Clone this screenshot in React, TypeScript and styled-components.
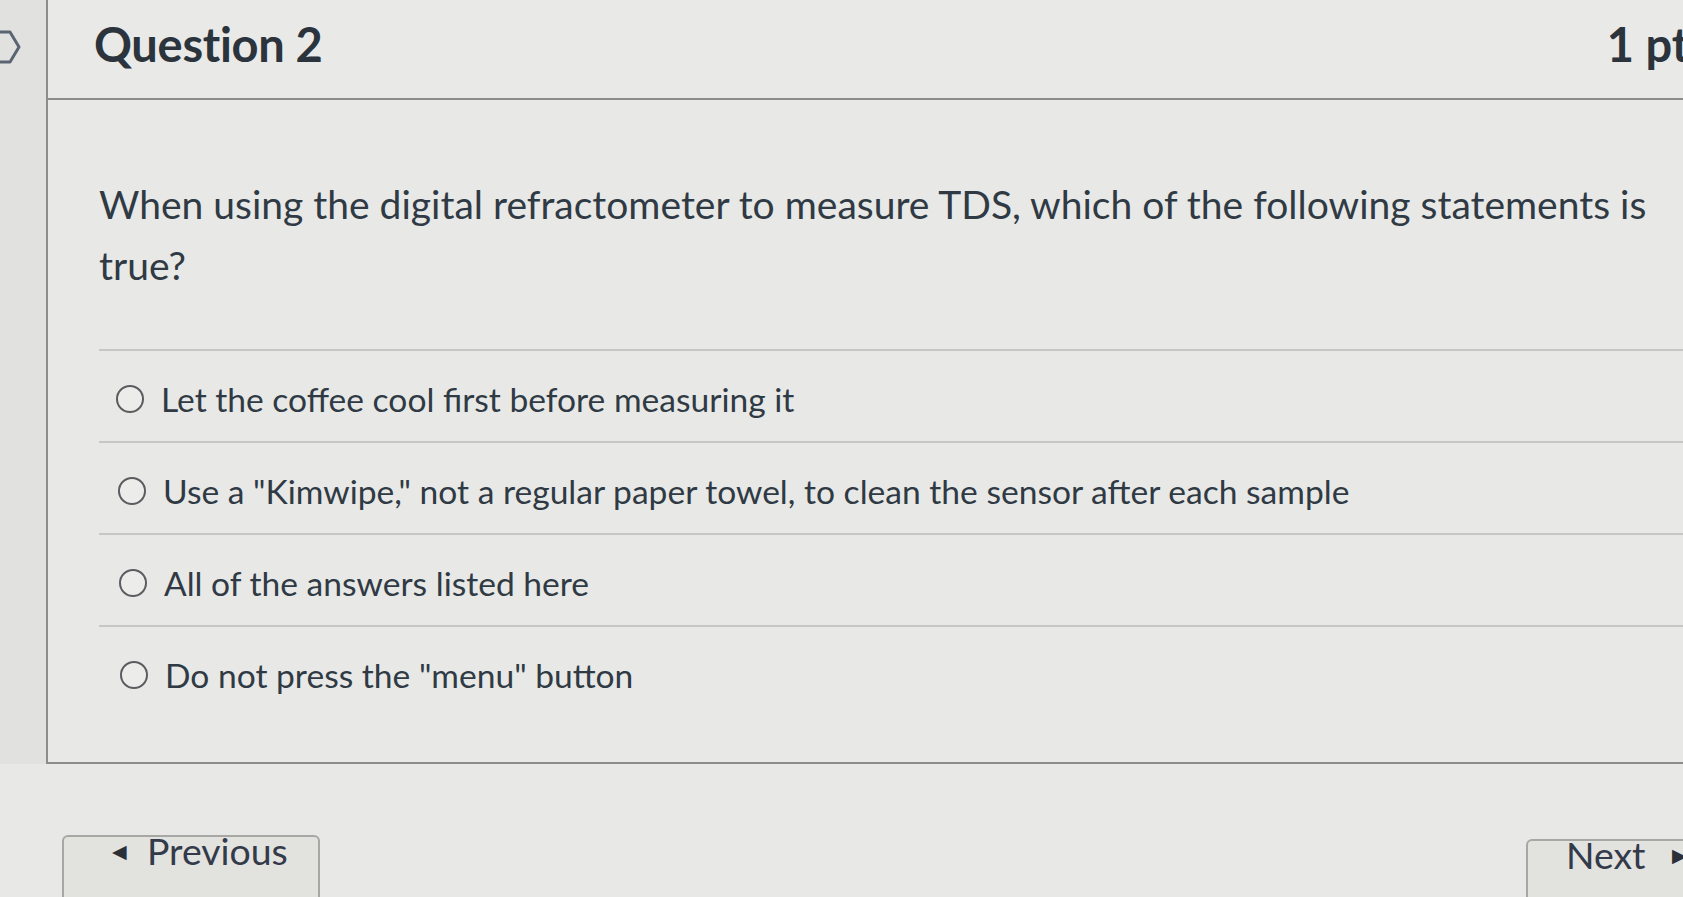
import React from "react";
import styled, { createGlobalStyle } from "styled-components";

const Global = createGlobalStyle`
  html, body {
    margin: 0;
    padding: 0;
    width: 1683px;
    height: 897px;
    overflow: hidden;
    background: #e8e8e6;
    font-family: Lato, "Open Sans", "Liberation Sans", sans-serif;
    color: #2f3a44;
  }
`;

const Page = styled.div`
  display: flex;
  width: 1780px;
  height: 897px;
`;

const Rail = styled.div`
  width: 46px;
  flex: none;
  height: 764px;
  background: #e1e1df;
  display: flex;
  flex-direction: column;
  padding-top: 30px;
  box-sizing: border-box;
`;

const Main = styled.div`
  flex: 1;
  display: flex;
  flex-direction: column;
`;

const QuestionBox = styled.section`
  border-left: 2px solid #8c8c8a;
  border-bottom: 2px solid #8c8c8a;
  height: 764px;
  flex: none;
  box-sizing: border-box;
  display: flex;
  flex-direction: column;
  overflow: hidden;
`;

const Header = styled.header`
  height: 100px;
  flex: none;
  box-sizing: border-box;
  border-bottom: 2px solid #8c8c8a;
  display: flex;
  align-items: center;
  justify-content: space-between;
  padding: 0 70px 10px 46px;
  background: #e9e9e7;
`;

const Title = styled.h2`
  margin: 0;
  font-size: 47px;
  font-weight: 700;
  letter-spacing: -0.3px;
  color: #2b333c;
`;

const Points = styled.span`
  font-size: 47px;
  font-weight: 700;
  color: #2b333c;
`;

const Body = styled.div`
  padding: 64px 0 0 51px;
  display: flex;
  flex-direction: column;
`;

const Prompt = styled.div`
  margin-top: 10px;
  font-size: 39px;
  line-height: 61px;
  color: #2f3a44;
  white-space: nowrap;
`;

const Answers = styled.div`
  margin-top: 53px;
  display: flex;
  flex-direction: column;
`;

const Answer = styled.label<{ $indent: number }>`
  display: flex;
  align-items: center;
  height: 92px;
  box-sizing: border-box;
  border-top: 2px solid #c6c6c3;
  padding: 5px 0 0 ${(p) => p.$indent}px;
  font-size: 33.6px;
  color: #2f3a44;
`;

const Radio = styled.span`
  width: 24px;
  height: 24px;
  border: 2.5px solid #5a5c60;
  border-radius: 50%;
  flex: none;
  margin-right: 17px;
  background: #ecedeb;
`;

const Nav = styled.div`
  display: flex;
  justify-content: space-between;
  padding: 71px 0 0 16px;
`;

const NavButton = styled.button<{ $w: number; $pad: string; $mt?: number }>`
  font-family: inherit;
  height: 90px;
  box-sizing: border-box;
  background: #e2e2df;
  border: 2px solid #a7a7a5;
  border-bottom: none;
  border-radius: 6px 6px 0 0;
  display: flex;
  align-items: flex-start;
  gap: ${(p) => (p.$mt ? 26 : 20)}px;
  padding: ${(p) => p.$pad};
  font-size: 37.4px;
  color: #333a49;
  width: ${(p) => p.$w}px;
  margin-top: ${(p) => p.$mt ?? 0}px;
`;

const Tri = styled.span`
  font-size: 19px;
  line-height: 27px;
  color: #2a2f38;
`;

const Label = styled.span`
  line-height: 27px;
`;

export default function App() {
  const answers = [
    { text: "Let the coffee cool first before measuring it", indent: 17 },
    {
      text: 'Use a "Kimwipe," not a regular paper towel, to clean the sensor after each sample',
      indent: 19,
    },
    { text: "All of the answers listed here", indent: 20 },
    { text: 'Do not press the "menu" button', indent: 21 },
  ];
  return (
    <>
      <Global />
      <Page>
        <Rail>
          <svg width="22" height="34" viewBox="0 0 22 34">
            <path
              d="M0 2 L10 2 L19 17 L10 32 L0 32"
              fill="none"
              stroke="#5b6572"
              strokeWidth="3"
              strokeLinejoin="round"
            />
          </svg>
        </Rail>
        <Main>
          <QuestionBox>
            <Header>
              <Title>Question 2</Title>
              <Points>1 pts</Points>
            </Header>
            <Body>
              <Prompt>
                When using the digital refractometer to measure TDS, which of the following statements is
                <br />
                true?
              </Prompt>
              <Answers>
                {answers.map((a) => (
                  <Answer key={a.text} $indent={a.indent}>
                    <Radio />
                    {a.text}
                  </Answer>
                ))}
              </Answers>
            </Body>
          </QuestionBox>
          <Nav>
            <NavButton $w={258} $pad="0 0 0 48px">
              <Tri>◀</Tri>
              <Label>Previous</Label>
            </NavButton>
            <NavButton $w={254} $pad="0 0 0 38px" $mt={4}>
              <Label>Next</Label>
              <Tri>▶</Tri>
            </NavButton>
          </Nav>
        </Main>
      </Page>
    </>
  );
}
